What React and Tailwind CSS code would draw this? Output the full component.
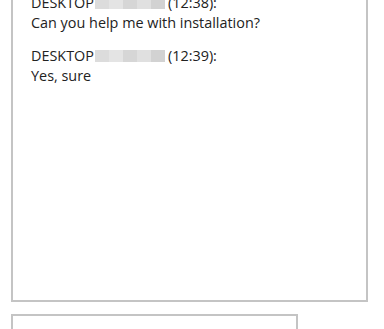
export default function App() {
  const messages = [
    { from: "DESKTOP", time: "12:38", text: "Can you help me with installation?" },
    { from: "DESKTOP", time: "12:39", text: "Yes, sure" },
  ];

  return (
    <div
      className="h-[329px] w-[384px] overflow-hidden bg-white"
      style={{ fontFamily: '"Open Sans", "Noto Sans", sans-serif' }}
    >
      <div className="-mt-[40px] ml-[11px] h-[342px] w-[357px] border-2 border-[#c4c4c4] bg-white pl-[18px] pt-[31px] text-[14.4px] leading-[20px] text-[#222]">
        <div className="flex flex-col gap-[13px]">
          {messages.map((m, i) => (
            <div key={i}>
              <div className="flex items-center">
                <span>{m.from}</span>
                <span className="mx-[1px] flex h-[12px] w-[70px]">
                  <span className="w-[14px] bg-[#dcdcdc]" />
                  <span className="w-[14px] bg-[#e4e4e4]" />
                  <span className="w-[14px] bg-[#d6d6d6]" />
                  <span className="w-[14px] bg-[#e0e0e0]" />
                  <span className="w-[14px] bg-[#d2d2d2]" />
                </span>
                <span className="ml-[2px]">({m.time}):</span>
              </div>
              <div>{m.text}</div>
            </div>
          ))}
        </div>
      </div>
      <div className="ml-[11px] mt-[12px] h-[40px] w-[287px] border-2 border-[#c4c4c4] bg-white" />
    </div>
  );
}
